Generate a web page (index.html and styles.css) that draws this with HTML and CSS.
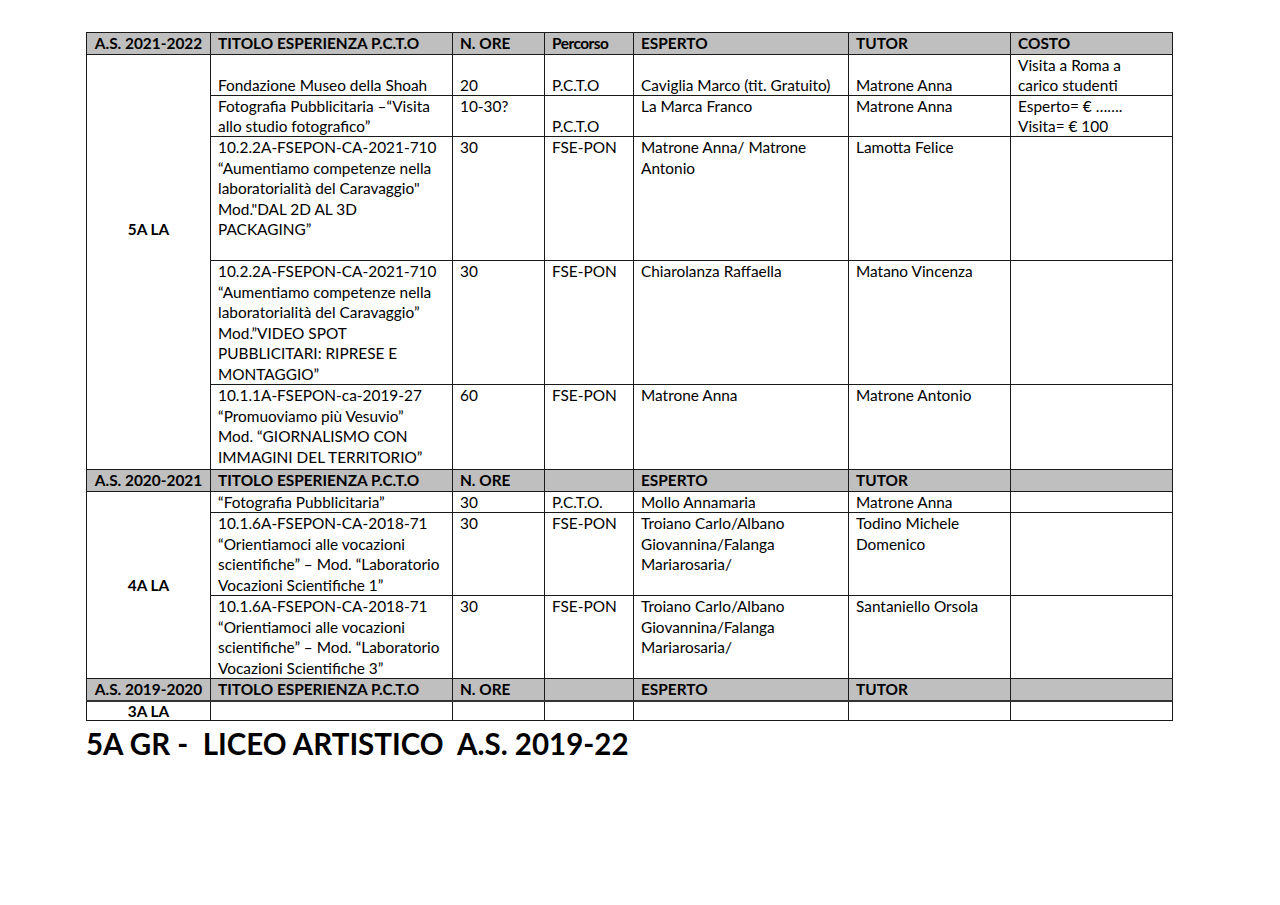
FILE: index.html
```html
<!DOCTYPE html>
<html lang="it">
<head>
<meta charset="utf-8">
<title>5A GR - Liceo Artistico</title>
<link rel="stylesheet" href="styles.css">
</head>
<body>
<div class="page">
<table class="pcto">
  <colgroup>
    <col class="c1"><col class="c2"><col class="c3"><col class="c4"><col class="c5"><col class="c6"><col class="c7">
  </colgroup>
  <tr class="head first">
    <th class="year">A.S. 2021-2022</th>
    <th>TITOLO ESPERIENZA P.C.T.O</th>
    <th>N. ORE</th>
    <th class="narrow">Percorso</th>
    <th>ESPERTO</th>
    <th>TUTOR</th>
    <th>COSTO</th>
  </tr>
  <tr class="bottom two">
    <td class="cls cls5" rowspan="5">5A LA</td>
    <td>Fondazione Museo della Shoah</td>
    <td>20</td>
    <td>P.C.T.O</td>
    <td>Caviglia Marco (tit. Gratuito)</td>
    <td>Matrone Anna</td>
    <td>Visita a Roma a<br>carico studenti</td>
  </tr>
  <tr class="two">
    <td>Fotografia Pubblicitaria –“Visita<br>allo studio fotografico”</td>
    <td>10-30?</td>
    <td class="atbottom">P.C.T.O</td>
    <td>La Marca Franco</td>
    <td>Matrone Anna</td>
    <td>Esperto= € …….<br>Visita= € 100</td>
  </tr>
  <tr>
    <td>10.2.2A-FSEPON-CA-2021-710<br>“Aumentiamo competenze nella<br>laboratorialità del Caravaggio"<br>Mod."DAL 2D AL 3D<br>PACKAGING”<br>&nbsp;</td>
    <td>30</td>
    <td>FSE-PON</td>
    <td>Matrone Anna/ Matrone<br>Antonio</td>
    <td>Lamotta Felice</td>
    <td></td>
  </tr>
  <tr>
    <td>10.2.2A-FSEPON-CA-2021-710<br>“Aumentiamo competenze nella<br>laboratorialità del Caravaggio”<br>Mod.”VIDEO SPOT<br>PUBBLICITARI: RIPRESE E<br>MONTAGGIO”</td>
    <td>30</td>
    <td>FSE-PON</td>
    <td>Chiarolanza Raffaella</td>
    <td>Matano Vincenza</td>
    <td></td>
  </tr>
  <tr class="tall">
    <td>10.1.1A-FSEPON-ca-2019-27<br>“Promuoviamo più Vesuvio”<br>Mod. “GIORNALISMO CON<br>IMMAGINI DEL TERRITORIO”</td>
    <td>60</td>
    <td>FSE-PON</td>
    <td>Matrone Anna</td>
    <td>Matrone Antonio</td>
    <td></td>
  </tr>
  <tr class="head">
    <th class="year">A.S. 2020-2021</th>
    <th>TITOLO ESPERIENZA P.C.T.O</th>
    <th>N. ORE</th>
    <th></th>
    <th>ESPERTO</th>
    <th>TUTOR</th>
    <th></th>
  </tr>
  <tr>
    <td class="cls" rowspan="3">4A LA</td>
    <td>“Fotografia Pubblicitaria”</td>
    <td>30</td>
    <td>P.C.T.O.</td>
    <td>Mollo Annamaria</td>
    <td>Matrone Anna</td>
    <td></td>
  </tr>
  <tr>
    <td>10.1.6A-FSEPON-CA-2018-71<br>“Orientiamoci alle vocazioni<br>scientifiche” – Mod. “Laboratorio<br>Vocazioni Scientifiche 1”</td>
    <td>30</td>
    <td>FSE-PON</td>
    <td>Troiano Carlo/Albano<br>Giovannina/Falanga<br>Mariarosaria/</td>
    <td>Todino Michele<br>Domenico</td>
    <td></td>
  </tr>
  <tr>
    <td>10.1.6A-FSEPON-CA-2018-71<br>“Orientiamoci alle vocazioni<br>scientifiche” – Mod. “Laboratorio<br>Vocazioni Scientifiche 3”</td>
    <td>30</td>
    <td>FSE-PON</td>
    <td>Troiano Carlo/Albano<br>Giovannina/Falanga<br>Mariarosaria/</td>
    <td>Santaniello Orsola</td>
    <td></td>
  </tr>
  <tr class="head last-head">
    <th class="year">A.S. 2019-2020</th>
    <th>TITOLO ESPERIENZA P.C.T.O</th>
    <th>N. ORE</th>
    <th></th>
    <th>ESPERTO</th>
    <th>TUTOR</th>
    <th></th>
  </tr>
  <tr class="last-row">
    <td class="cls">3A LA</td>
    <td></td>
    <td></td>
    <td></td>
    <td></td>
    <td></td>
    <td></td>
  </tr>
</table>
<h1 class="title">5A GR -&nbsp; LICEO ARTISTICO&nbsp; A.S. 2019-22</h1>
</div>
</body>
</html>
```

FILE: styles.css
```css
html, body {
  margin: 0;
  padding: 0;
  background: #ffffff;
}

body {
  font-family: "Lato", "Carlito", "Liberation Sans", sans-serif;
  color: #000000;
}

.page {
  padding: 32px 0 0 86px;
}

.pcto {
  border-collapse: collapse;
  table-layout: fixed;
  width: 1087px;
  font-size: 15.4px;
  line-height: 20.5px;
}

.c1 { width: 124px; }
.c2 { width: 242px; }
.c3 { width: 92px; }
.c4 { width: 89px; }
.c5 { width: 215px; }
.c6 { width: 162px; }
.c7 { width: 162px; }

.pcto th,
.pcto td {
  border: 1px solid #1a1a1a;
  padding: 0 7px;
  text-align: left;
  vertical-align: top;
  height: 20px;
  white-space: nowrap;
}

.pcto th {
  background: #bfbfbf;
  font-weight: 700;
  vertical-align: middle;
  height: 20px;
}

.pcto .head.first th {
  height: 21px;
}

.pcto th.year {
  text-align: center;
  padding: 0 2px;
}

.pcto th.narrow {
  letter-spacing: -0.5px;
}

.pcto .two td {
  line-height: 20px;
}

.pcto .bottom td {
  vertical-align: bottom;
}

.pcto td.atbottom {
  vertical-align: bottom;
}

.pcto .tall td {
  height: 84px;
}

.pcto .last-head th {
  border-bottom: 2px solid #333333;
}

.pcto .last-row td {
  height: 18px;
  line-height: 18px;
}

.pcto td.cls {
  text-align: center;
  vertical-align: middle;
  font-weight: 700;
  padding: 0 2px;
}

.pcto .two td.cls5,
.pcto td.cls5 {
  vertical-align: middle;
  line-height: 20.5px;
  padding-bottom: 66px;
}

.title {
  margin: 4px 0 0 0;
  font-size: 29.5px;
  line-height: 38px;
  font-weight: 700;
  letter-spacing: 0;
}
```
